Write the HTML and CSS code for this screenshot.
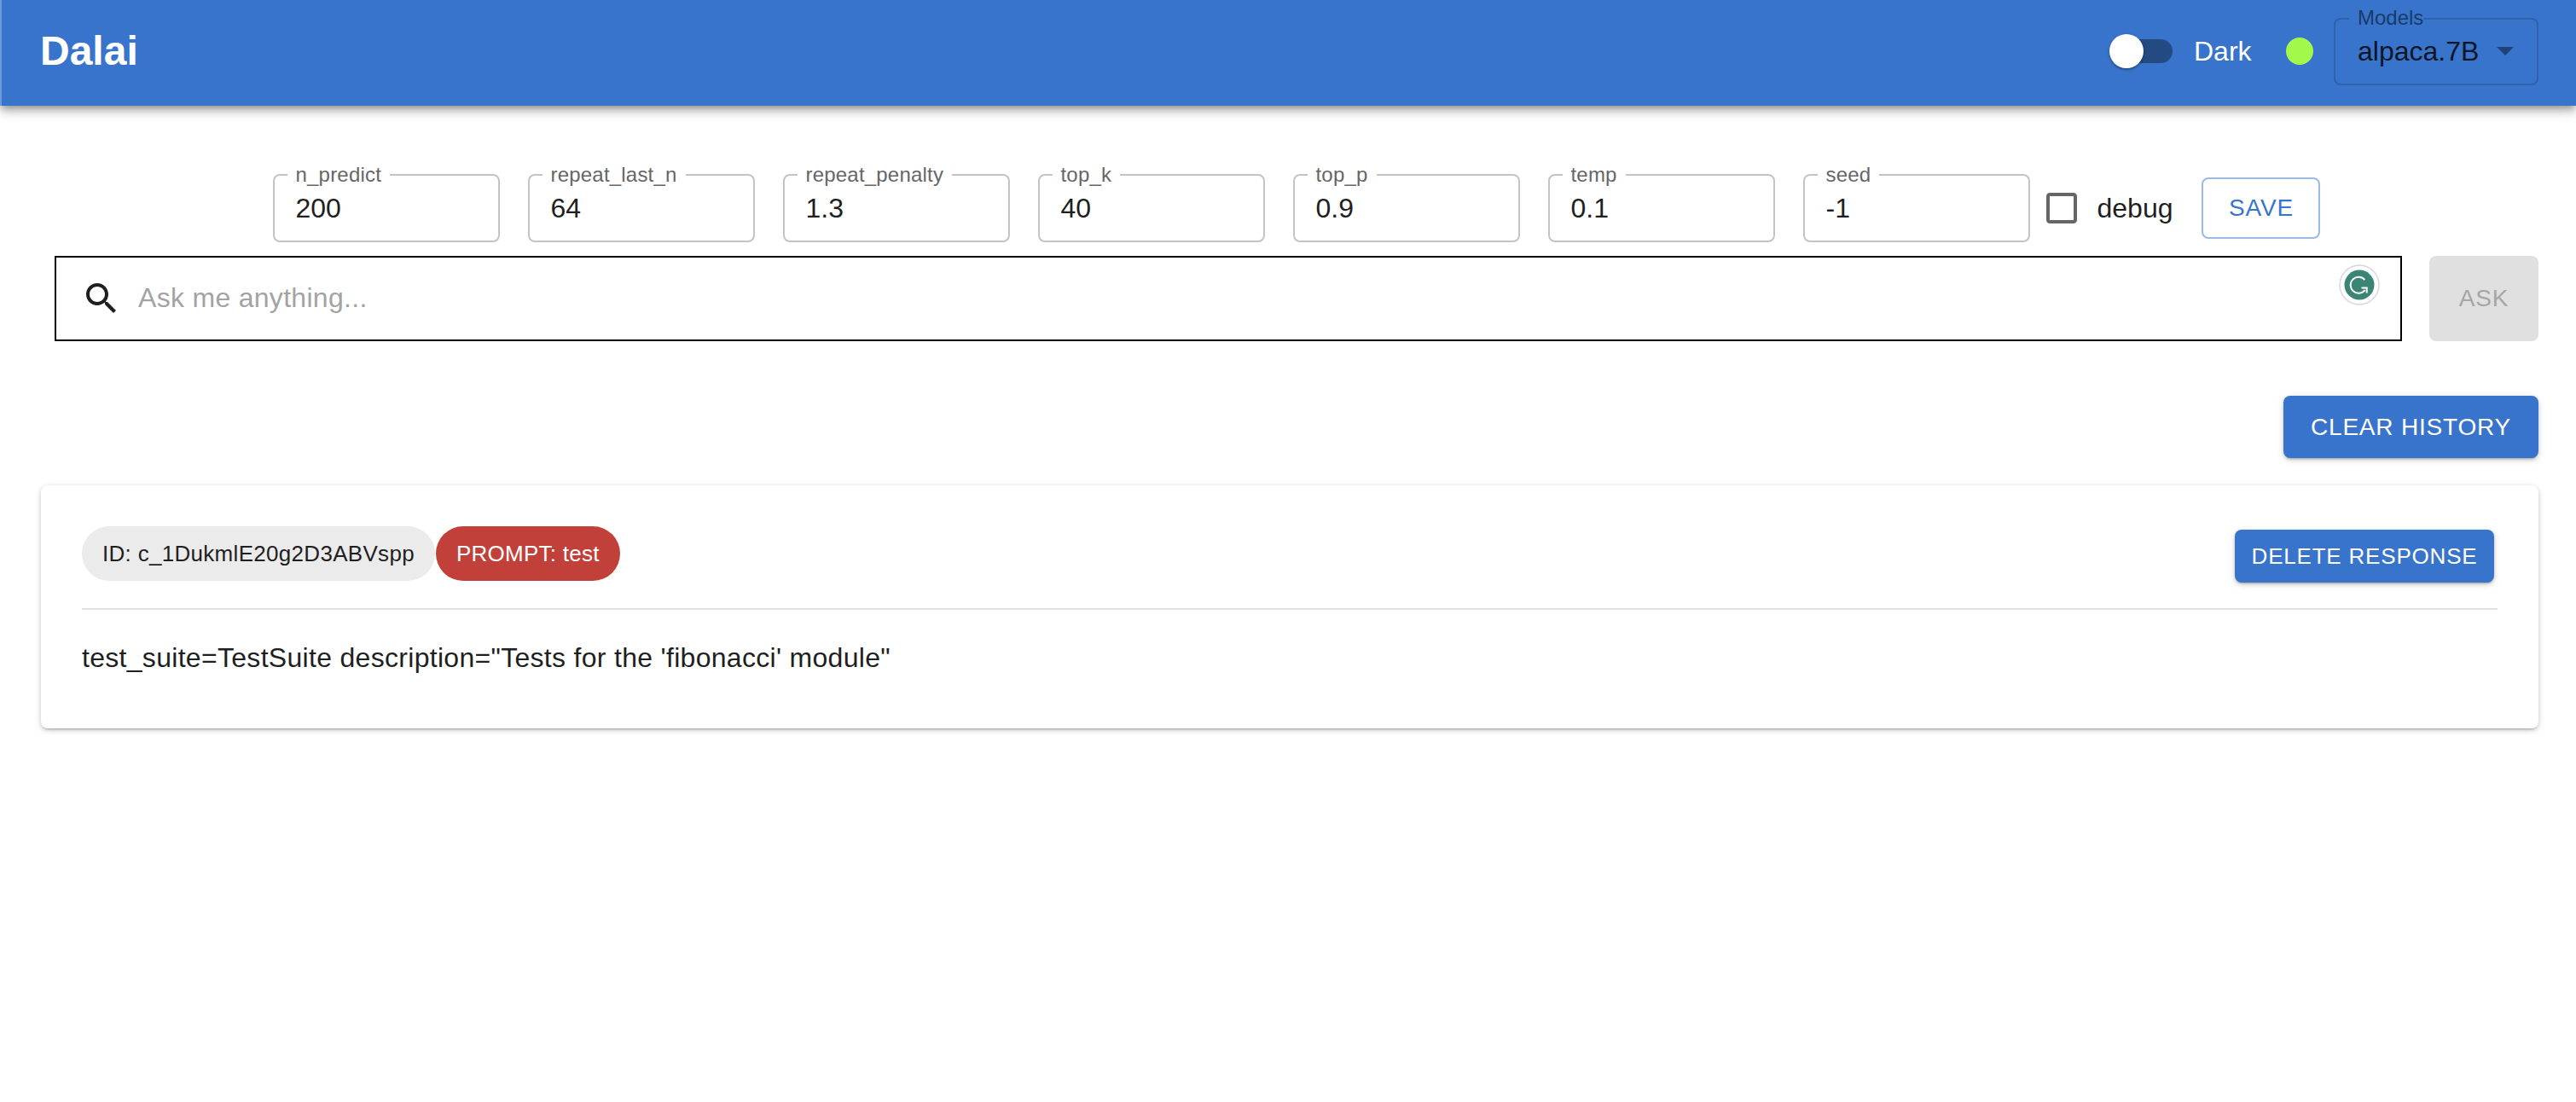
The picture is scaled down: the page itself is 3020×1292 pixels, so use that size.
FILE: index.html
```html
<!DOCTYPE html>
<html lang="en">
<head>
<meta charset="utf-8">
<title>Dalai</title>
<link rel="stylesheet" href="styles.css">
</head>
<body>
<header class="appbar">
  <h1 class="brand">Dalai</h1>
  <div class="appbar-tools">
    <div class="switch"><span class="switch-track"></span><span class="switch-thumb"></span></div>
    <span class="switch-label">Dark</span>
    <span class="status-dot"></span>
    <div class="model-select">
      <span class="model-label">Models</span>
      <span class="model-value">alpaca.7B</span>
      <span class="model-arrow"></span>
    </div>
  </div>
</header>
<main class="main">
  <section class="controls">
    <div class="settings">
      <div class="field"><span class="field-label">n_predict</span><span class="field-value">200</span></div>
      <div class="field"><span class="field-label">repeat_last_n</span><span class="field-value">64</span></div>
      <div class="field"><span class="field-label">repeat_penalty</span><span class="field-value">1.3</span></div>
      <div class="field"><span class="field-label">top_k</span><span class="field-value">40</span></div>
      <div class="field"><span class="field-label">top_p</span><span class="field-value">0.9</span></div>
      <div class="field"><span class="field-label">temp</span><span class="field-value">0.1</span></div>
      <div class="field"><span class="field-label">seed</span><span class="field-value">-1</span></div>
      <div class="debug">
        <svg class="checkbox" viewBox="0 0 24 24"><path d="M19 5v14H5V5h14m0-2H5c-1.1 0-2 .9-2 2v14c0 1.1.9 2 2 2h14c1.1 0 2-.9 2-2V5c0-1.1-.9-2-2-2z"/></svg>
        <span class="debug-label">debug</span>
      </div>
      <button class="btn btn-outline">SAVE</button>
    </div>
    <div class="ask-row">
      <div class="search">
        <svg class="search-icon" viewBox="0 0 24 24"><path d="M15.5 14h-.79l-.28-.27C15.41 12.59 16 11.11 16 9.5 16 5.91 13.09 3 9.5 3S3 5.91 3 9.5 5.91 16 9.5 16c1.61 0 3.09-.59 4.23-1.57l.27.28v.79l5 4.99L20.49 19l-4.99-5zm-6 0C7.01 14 5 11.99 5 9.5S7.01 5 9.5 5 14 7.01 14 9.5 11.99 14 9.5 14z"/></svg>
        <span class="placeholder">Ask me anything...</span>
        <svg class="grammarly" viewBox="0 0 48 48">
          <circle cx="24" cy="24" r="23" fill="#fff" stroke="#d5d6e2" stroke-width="1.4"/>
          <circle cx="24" cy="24" r="17.5" fill="#3b8574"/>
          <path d="M30.5 18.2A9.5 9.5 0 1 0 30.6 30.2" fill="none" stroke="#fff" stroke-width="2"/>
          <path d="M26.5 27.5h6.2v6" fill="none" stroke="#fff" stroke-width="2"/>
        </svg>
      </div>
      <button class="btn btn-disabled">ASK</button>
    </div>
  </section>
  <div class="history-bar"><button class="btn btn-clear">CLEAR HISTORY</button></div>
  <article class="card">
    <div class="card-head">
      <div class="chips">
        <span class="chip chip-id">ID: c_1DukmlE20g2D3ABVspp</span>
        <span class="chip chip-prompt">PROMPT: test</span>
      </div>
      <button class="btn btn-delete">DELETE RESPONSE</button>
    </div>
    <p class="response">test_suite=TestSuite description="Tests for the 'fibonacci' module"</p>
  </article>
</main>
</body>
</html>
```
FILE: styles.css
```css
* { box-sizing: border-box; }
html, body { margin: 0; padding: 0; }
body {
  background: #fff;
  color: #1f1f1f;
  font-family: "Liberation Sans", Arial, sans-serif;
  min-height: 1292px;
}
.appbar {
  height: 124px;
  background: #3874cb;
  border-left: 2px solid #6d9ad9;
  box-shadow: 0 4px 8px -2px rgba(0,0,0,.3), 0 8px 10px 0 rgba(0,0,0,.14), 0 2px 20px 0 rgba(0,0,0,.12);
  display: flex;
  align-items: center;
  justify-content: space-between;
  padding: 0 44px 4px 45px;
  color: #fff;
}
.brand { margin: 0; font-size: 48px; font-weight: 700; line-height: 1; }
.appbar-tools { display: flex; align-items: center; }
.switch { position: relative; width: 74px; height: 40px; margin-right: 25px; }
.switch-track { position: absolute; left: 6px; right: 0; top: 6px; height: 28px; border-radius: 14px; background: #244a82; }
.switch-thumb { position: absolute; left: 0; top: 0; width: 40px; height: 40px; border-radius: 50%; background: #fff; box-shadow: 0 2px 2px rgba(0,0,0,.25), 0 1px 4px rgba(0,0,0,.15); }
.switch-label { font-size: 32px; width: 68px; margin-right: 40px; }
.status-dot { width: 32px; height: 32px; border-radius: 50%; background: #a2f94a; margin-right: 24px; }
.model-select {
  position: relative;
  width: 240px;
  height: 79px;
  border: 2px solid #2f62ad;
  border-radius: 8px;
  color: #0d1625;
  display: flex;
  align-items: center;
  padding: 0 0 0 26px;
}
.model-label {
  position: absolute;
  left: 16px;
  top: -15px;
  background: #3874cb;
  padding-left: 10px;
  font-size: 24px;
  line-height: 26px;
  color: #1a3a69;
}
.model-value { font-size: 32px; line-height: 40px; }
.model-arrow { margin-left: 21px; width: 0; height: 0; border-left: 10px solid transparent; border-right: 10px solid transparent; border-top: 10px solid #1f4278; }
.main { padding: 0 44px 0 48px; }
.controls { padding: 80px 0 0 16px; }
.settings { display: flex; align-items: center; justify-content: center; height: 80px; gap: 33px; }
.field {
  position: relative;
  width: 266px;
  height: 80px;
  border: 2px solid #c4c4c4;
  border-radius: 8px;
  padding: 0 25px;
  display: flex;
  align-items: center;
}
.field-label {
  position: absolute;
  left: 15px;
  top: -14px;
  background: #fff;
  padding: 0 10px;
  font-size: 24px;
  line-height: 26px;
  letter-spacing: .2px;
  color: #666;
  white-space: nowrap;
}
.field-value { font-size: 32px; line-height: 40px; color: #1f1f1f; }
.debug { display: flex; align-items: center; margin-left: -20px; }
.checkbox { width: 48px; height: 48px; fill: #666; margin-right: 18px; display: block; }
.debug-label { font-size: 32px; color: #1f1f1f; margin-right: 1px; }
.btn {
  font-family: inherit;
  font-size: 28px;
  letter-spacing: .8px;
  border: 0;
  border-radius: 8px;
  padding: 0;
  cursor: pointer;
}
.btn-outline { width: 139px; height: 72px; background: #fff; color: #3874cb; border: 2px solid #9bb9e5; }
.ask-row { display: flex; gap: 32px; margin-top: 16px; }
.search {
  position: relative;
  flex: 1;
  height: 100px;
  border: 2px solid #000;
  display: flex;
  align-items: center;
  padding-left: 29px;
}
.search-icon { width: 48px; height: 48px; fill: #1f1f1f; display: block; margin-right: 19px; }
.placeholder { font-size: 32px; letter-spacing: .3px; color: #a3a3a3; margin-top: -2px; }
.grammarly { position: absolute; right: 24px; top: 8px; width: 48px; height: 48px; }
.btn-disabled { width: 128px; height: 100px; background: #e0e0e0; color: #a6a6a6; }
.history-bar { display: flex; justify-content: flex-end; margin-top: 64px; }
.btn-clear { width: 299px; height: 73px; background: #3874cb; color: #fff; box-shadow: 0 3px 2px -2px rgba(0,0,0,.2), 0 2px 4px rgba(0,0,0,.14), 0 2px 10px rgba(0,0,0,.12); }
.card {
  margin-top: 32px;
  height: 285px;
  border-radius: 8px;
  background: #fff;
  padding: 48px 48px 0;
  box-shadow: 0 3px 2px -2px rgba(0,0,0,.2), 0 2px 4px rgba(0,0,0,.14), 0 2px 10px rgba(0,0,0,.12);
}
.card-head {
  display: flex;
  align-items: flex-start;
  justify-content: space-between;
  height: 98px;
  padding-right: 4px;
  border-bottom: 2px solid #e0e0e0;
}
.chips { display: flex; align-items: center; gap: 1px; }
.chip { height: 64px; border-radius: 32px; padding: 0 24px; display: flex; align-items: center; font-size: 26px; }
.chip-id { background: #ebebeb; color: #1f1f1f; letter-spacing: .3px; }
.chip-prompt { background: #c2403a; color: #fff; letter-spacing: .25px; }
.btn-delete { width: 304px; height: 62px; margin-top: 4px; font-size: 26px; background: #3874cb; color: #fff; box-shadow: 0 3px 2px -2px rgba(0,0,0,.2), 0 2px 4px rgba(0,0,0,.14), 0 2px 10px rgba(0,0,0,.12); }
.response { margin: 38px 0 0; font-size: 32px; line-height: 36px; letter-spacing: .3px; color: #1f1f1f; }
```
